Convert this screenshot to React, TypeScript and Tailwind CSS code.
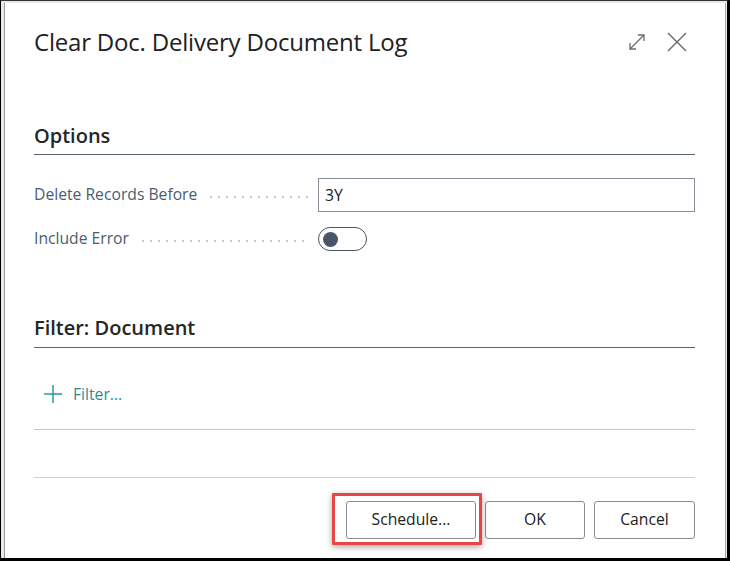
import { useState } from 'react';

function ExpandIcon() {
  return (
    <svg width="20" height="20" viewBox="0 0 20 20" fill="none" stroke="#6b6b6b" strokeWidth="1.3">
      <path d="M3 17 L17 3" />
      <path d="M11 3 H17 V9" />
      <path d="M3 11 V17 H9" />
    </svg>
  );
}

function CloseIcon() {
  return (
    <svg width="20" height="20" viewBox="0 0 20 20" fill="none" stroke="#6b6b6b" strokeWidth="1.5">
      <path d="M1 1 L19 19" />
      <path d="M19 1 L1 19" />
    </svg>
  );
}

function Field({ label, children }: { label: string; children: React.ReactNode }) {
  return (
    <div className="flex items-center">
      <div className="flex w-[284px] items-center">
        <span className="text-[15.7px] whitespace-nowrap text-[#4a5d72]">{label}</span>
        <span className="mx-[10px] h-[2px] flex-1 translate-y-[2px] bg-[radial-gradient(circle,#c4c8cd_0.8px,transparent_1px)] bg-[length:8px_2px]" />
      </div>
      <div className="flex-1">{children}</div>
    </div>
  );
}

export default function App() {
  const [value, setValue] = useState('3Y');
  const [includeError, setIncludeError] = useState(false);

  return (
    <div
      className="flex h-[561px] w-[730px] border-t border-l border-t-[#333] border-l-black border-r-[3px] border-b-[3px] border-r-black border-b-black bg-[#e9e9e9] pt-[2px] pl-[3px] pr-[1px]"
      style={{ fontFamily: '"Open Sans", "Noto Sans", sans-serif' }}
    >
      <div className="flex flex-1 flex-col border-l border-r border-l-[#9a9a9a] border-r-[#a8a8a8] bg-white pr-[30px] pl-[29px]">
        <header className="flex h-[76px] items-center pt-[1px]">
          <h1 className="flex-1 text-[24px] tracking-[-0.2px] text-[#212121]">Clear Doc. Delivery Document Log</h1>
          <div className="flex items-center gap-[20px] pr-[8px]">
            <button aria-label="Expand" className="flex h-5 w-5 items-center justify-center">
              <ExpandIcon />
            </button>
            <button aria-label="Close" className="flex h-5 w-5 items-center justify-center">
              <CloseIcon />
            </button>
          </div>
        </header>

        <section className="mt-[42px]">
          <h2 className="border-b border-[#5a6470] pb-[3px] text-[20px] font-semibold text-[#262626]">Options</h2>
          <div className="mt-[23px] flex flex-col gap-[15px]">
            <Field label="Delete Records Before">
              <input
                value={value}
                onChange={(e) => setValue(e.target.value)}
                className="h-[34px] w-full border border-[#8a909a] px-[6px] text-[15.7px] text-[#212121] outline-none"
              />
            </Field>
            <Field label="Include Error">
              <button
                role="switch"
                aria-checked={includeError}
                onClick={() => setIncludeError(!includeError)}
                className="flex h-[24px] w-[49px] items-center rounded-full border border-[#4b5563] bg-white px-[4px]"
              >
                <span className="h-[15px] w-[15px] rounded-full bg-[#4b5568]" />
              </button>
            </Field>
          </div>
        </section>

        <section className="mt-[62px]">
          <h2 className="border-b border-[#5a6470] pb-[4px] text-[20px] font-semibold text-[#262626]">Filter: Document</h2>
          <div className="flex h-[82px] items-center border-b border-[#c6c6c6] pt-[12px] pl-[10px]">
            <button className="flex items-center gap-[11px] text-[15.7px] text-[#2a8c93]">
              <svg width="18" height="18" viewBox="0 0 18 18" stroke="#2a9aa0" strokeWidth="1.5">
                <path d="M9 0 V18" />
                <path d="M0 9 H18" />
              </svg>
              Filter...
            </button>
          </div>
        </section>

        <div className="mt-[47px] border-t border-[#d0d0d0]" />

        <footer className="mt-[23px] flex justify-end gap-[9px]">
          <div className="relative">
            <span className="pointer-events-none absolute -top-[8px] -right-[6px] -bottom-[6px] -left-[14px] rounded-[1px] border-[3px] border-[#e84545] shadow-[0_2px_6px_rgba(0,0,0,0.35)]" />
            <button className="h-[38px] w-[130px] rounded-[3px] border border-[#8c8c8c] bg-white text-[15.7px] text-[#212121]">
              Schedule...
            </button>
          </div>
          <button className="h-[38px] w-[100px] rounded-[3px] border border-[#8c8c8c] bg-white text-[15.7px] text-[#212121]">
            OK
          </button>
          <button className="h-[38px] w-[101px] rounded-[3px] border border-[#8c8c8c] bg-white text-[15.7px] text-[#212121]">
            Cancel
          </button>
        </footer>
      </div>
    </div>
  );
}
